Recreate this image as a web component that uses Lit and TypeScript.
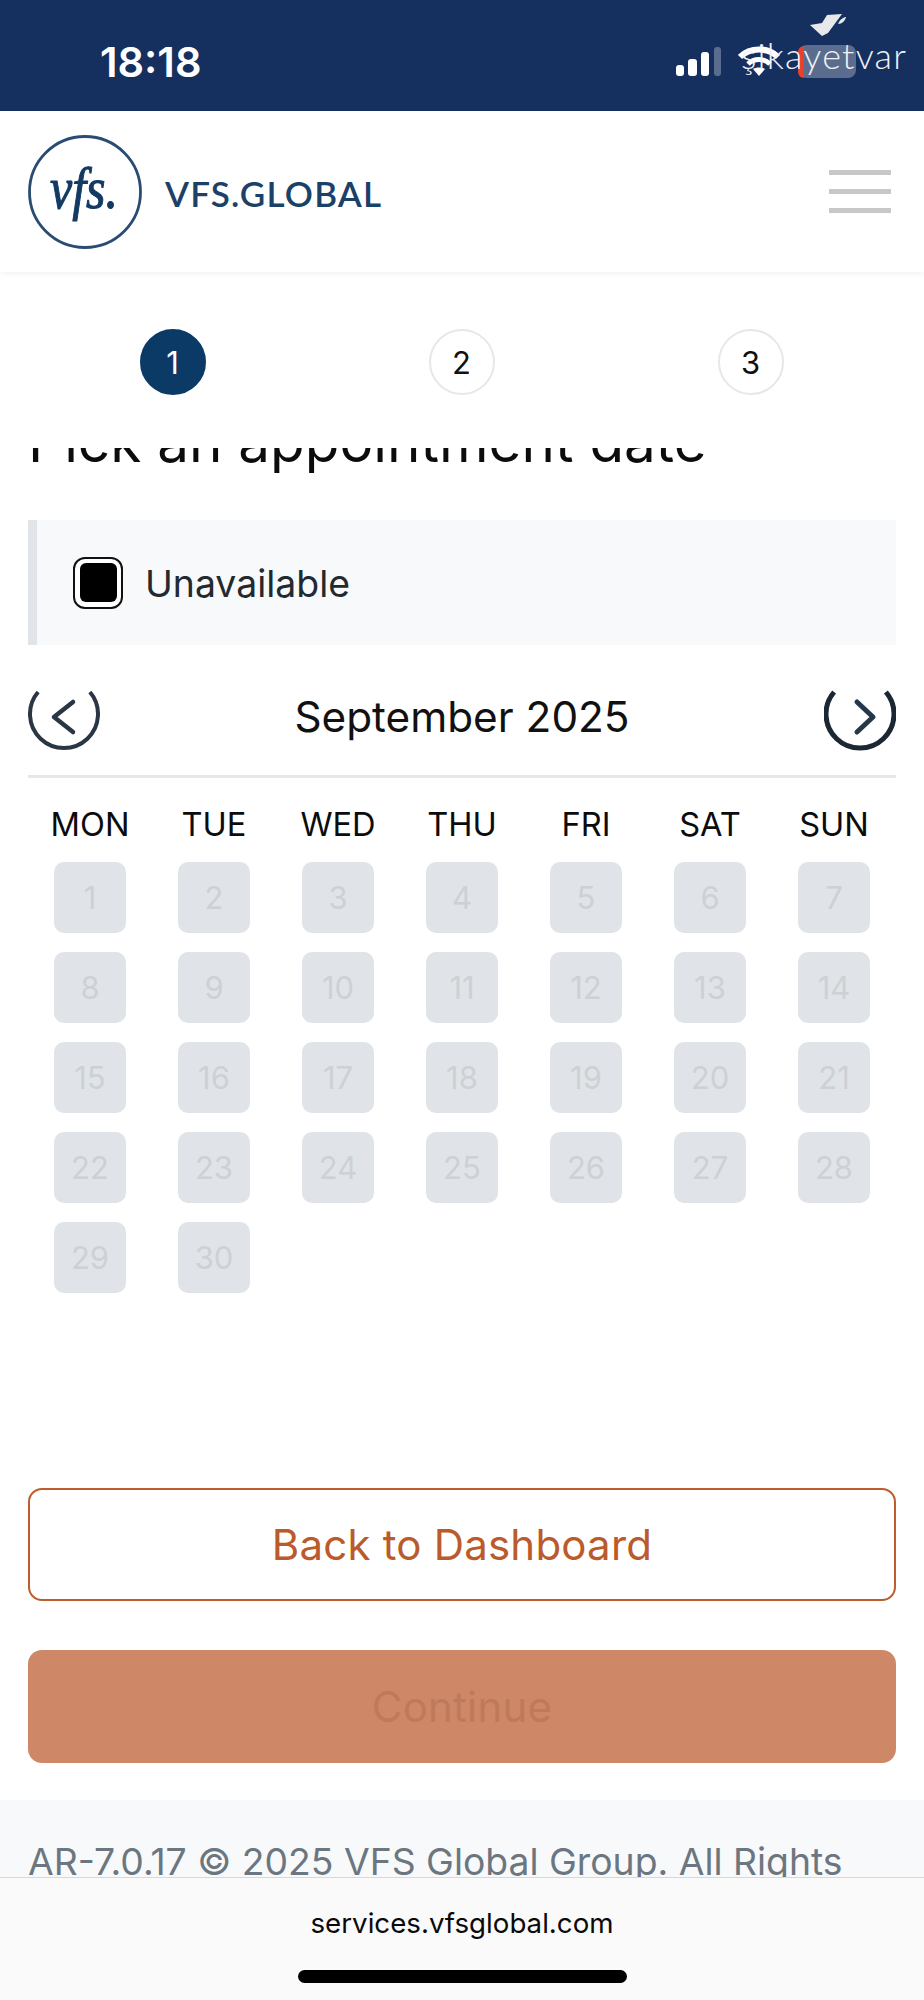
import { LitElement, html, css } from "lit";
import { customElement } from "lit/decorators.js";

const DAYS = ["MON", "TUE", "WED", "THU", "FRI", "SAT", "SUN"];

@customElement("app-root")
export class AppRoot extends LitElement {
  static styles = css`
    :host { display: block; width: 924px; height: 2000px; overflow: hidden; position: relative; background: #fff; font-family: Inter, "Liberation Sans", sans-serif; color: #111; }
    .status { height: 111px; background: #152f5e; display: flex; align-items: center; color: #fff; box-sizing: border-box; position: relative; }
    .time { font-size: 41.5px; font-weight: 600; margin-left: 100px; margin-top: 12px; line-height: 44px; }
    .sig { position: absolute; left: 676px; top: 47px; }
    .wifi { position: absolute; left: 738px; top: 46px; }
    .batt { position: absolute; left: 799px; top: 45px; width: 57px; height: 33px; border-radius: 8px; background: rgba(255,255,255,.3); }
    .batt-red { position: absolute; left: 798px; top: 46px; width: 6px; height: 32px; border-radius: 8px 0 0 8px; background: #e8402f; }
    .wm { position: absolute; left: 741px; top: 33px; font-family: Lato, sans-serif; font-size: 36px; font-weight: 300; letter-spacing: 1.2px; line-height: 44px; color: #f0f1f5; }
    .wm-logo { position: absolute; left: 809px; top: 13px; }
    .hdr { height: 161px; background: #fff; display: flex; align-items: center; justify-content: space-between; padding: 0 33px 0 28px; box-sizing: border-box; box-shadow: 0 2px 6px rgba(0,0,0,.05); position: relative; }
    .brand { display: flex; align-items: center; gap: 21px; }
    .logo { width: 116px; height: 116px; margin-top: 1px; display: block; }
    .logo text { font-family: "Liberation Serif", serif; font-style: italic; font-size: 60px; fill: #123a63; stroke: #123a63; stroke-width: 1.1px; }
    .bname { font-family: Lato, sans-serif; font-size: 35px; font-weight: 600; color: #1b4168; letter-spacing: 1.2px; margin-top: 2px; }
    .burger { display: flex; flex-direction: column; gap: 14px; width: 62px; }
    .burger i { display: block; height: 5px; background: #c8c8c8; }
    .steps { display: grid; grid-template-columns: repeat(3, 289px); padding: 57px 28px 0; height: 176px; box-sizing: border-box; }
    .step { justify-self: center; width: 66px; height: 66px; border-radius: 50%; box-sizing: border-box; border: 2px solid #e7e7e7; display: flex; align-items: center; justify-content: center; font-size: 31px; color: #111; }
    .step.on { background: #0c3a66; border-color: #0c3a66; color: #fff; }
    .title-clip { height: 32px; overflow: hidden; display: flex; align-items: flex-end; padding: 0 28px; margin-bottom: 40px; }
    .title { font-size: 56.6px; line-height: 64px; white-space: nowrap; flex: none; margin-bottom: 6px; color: #0c0c0c; }
    .legend { margin: 0 28px; height: 125px; background: #f7f9fb; border-left: 9px solid #e1e4e8; display: flex; align-items: center; box-sizing: border-box; padding-left: 36px; gap: 22px; font-size: 37.4px; color: #24292f; }
    .legend span { margin-top: 2px; }
    .swatch { width: 50px; height: 52px; border: 2px solid #111; border-radius: 12px; box-sizing: border-box; padding: 4.5px; background: #fff; }
    .swatch i { display: block; width: 100%; height: 100%; background: #000; border-radius: 6px; }
    .cal-h { margin: 45px 28px 0; height: 62px; display: flex; align-items: flex-start; justify-content: space-between; }
    .cal-h svg { display: block; width: 72px; height: 62px; }
    .month { font-size: 42.3px; font-weight: 400; line-height: 60px; color: #111; margin-top: -3px; }
    .rule { margin: 23px 28px 0; height: 3px; background: #e6e7e9; }
    .dow { display: grid; grid-template-columns: repeat(7, 124px); margin: 26px 28px 0; text-align: center; font-size: 32.6px; line-height: 40px; color: #0c0c0c; }
    .dates { display: grid; grid-template-columns: repeat(7, 124px); grid-auto-rows: 71px; row-gap: 19px; margin: 18px 28px 0; }
    .d { justify-self: center; width: 72px; height: 71px; border-radius: 10px; background: #e0e4e8; color: #cdd1d5; display: flex; align-items: center; justify-content: center; font-size: 31px; }
    .btn { margin: 0 28px; height: 113px; box-sizing: border-box; border-radius: 14px; display: flex; align-items: center; justify-content: center; font-size: 42px; letter-spacing: .2px; }
    .back { margin-top: 195px; border: 2px solid #bd5d2c; color: #bb5a2a; background: #fff; }
    .cont { margin-top: 49px; background: #ce8868; color: #bf7a5c; }
    .foot { margin-top: 37px; height: 77px; overflow: hidden; background: #f7f9fb; padding: 39px 28px 0; box-sizing: border-box; font-size: 37.3px; line-height: 46px; color: #6c7680; white-space: nowrap; }
    .bar { height: 123px; background: #fafafb; border-top: 1px solid #d8d8d8; box-sizing: border-box; display: flex; flex-direction: column; align-items: center; }
    .url { margin-top: 25px; font-size: 27.7px; line-height: 40px; color: #0a0a0a; }
    .home { margin-top: 27px; width: 329px; height: 13px; border-radius: 7px; background: #000; }
  `;

  render() {
    const dates = Array.from({ length: 30 }, (_, i) => i + 1);
    return html`
      <div class="status">
        <div class="time">18:18</div>
        <svg class="sig" width="46" height="29" viewBox="0 0 46 29">
          <rect x="0" y="18" width="8" height="11" rx="3" fill="#fff"/>
          <rect x="12" y="12" width="9" height="17" rx="3" fill="#fff"/>
          <rect x="25" y="5" width="8" height="24" rx="3" fill="#fff"/>
          <rect x="38" y="0" width="7" height="29" rx="3" fill="#fff" fill-opacity=".3"/>
        </svg>
        <svg class="wifi" width="42" height="30" viewBox="0 0 42 30">
          <path d="M2 11 C12 1 30 1 40 11" fill="none" stroke="#fff" stroke-width="6"/>
          <path d="M10 18 C16 12 26 12 32 18" fill="none" stroke="#fff" stroke-width="5"/>
          <path d="M21 30 L15 23 C18 21 24 21 27 23 Z" fill="#fff"/>
        </svg>
        <div class="batt"></div><div class="batt-red"></div>
        <div class="wm">şikayetvar</div>
        <svg class="wm-logo" width="40" height="24" viewBox="0 0 40 24">
          <path d="M1 12 L13 10 L18 2 L33 1 L19 20 L13 23 Z" fill="#e8e8ea"/>
          <path d="M29 11 C31 6 35 4 37 4 C36 8 33 11 29 11 Z" fill="#e8e8ea"/>
        </svg>
      </div>
      <div class="hdr">
        <div class="brand">
          <svg class="logo" viewBox="0 0 116 116">
            <circle cx="57" cy="58" r="55.5" fill="none" stroke="#2a4c72" stroke-width="2.8"/>
            <text x="22" y="74" textLength="68" lengthAdjust="spacingAndGlyphs">vfs.</text>
          </svg>
          <div class="bname">VFS.GLOBAL</div>
        </div>
        <div class="burger"><i></i><i></i><i></i></div>
      </div>
      <div class="steps">
        <div class="step on">1</div><div class="step">2</div><div class="step">3</div>
      </div>
      <div class="title-clip"><div class="title">Pick an appointment date</div></div>
      <div class="legend"><div class="swatch"><i></i></div><span>Unavailable</span></div>
      <div class="cal-h">
        <svg viewBox="0 0 72 62"><path d="M10.1 2 A34 34 0 1 0 61.9 2" fill="none" stroke="#2a3644" stroke-width="4"/><path d="M45 12 L26 27 L45 42" fill="none" stroke="#2a3644" stroke-width="4.5" stroke-linecap="round" stroke-linejoin="round"/></svg>
        <div class="month">September 2025</div>
        <svg viewBox="0 0 72 62"><path d="M10.1 2 A34 34 0 1 0 61.9 2" fill="none" stroke="#1b2733" stroke-width="5"/><path d="M33 12 L49 27 L33 42" fill="none" stroke="#24384a" stroke-width="5" stroke-linecap="round" stroke-linejoin="round"/></svg>
      </div>
      <div class="rule"></div>
      <div class="dow">${DAYS.map((d) => html`<div>${d}</div>`)}</div>
      <div class="dates">${dates.map((d) => html`<div class="d">${d}</div>`)}</div>
      <div class="btn back">Back to Dashboard</div>
      <div class="btn cont">Continue</div>
      <div class="foot">AR-7.0.17 © 2025 VFS Global Group. All Rights</div>
      <div class="bar"><div class="url">services.vfsglobal.com</div><div class="home"></div></div>
    `;
  }
}
